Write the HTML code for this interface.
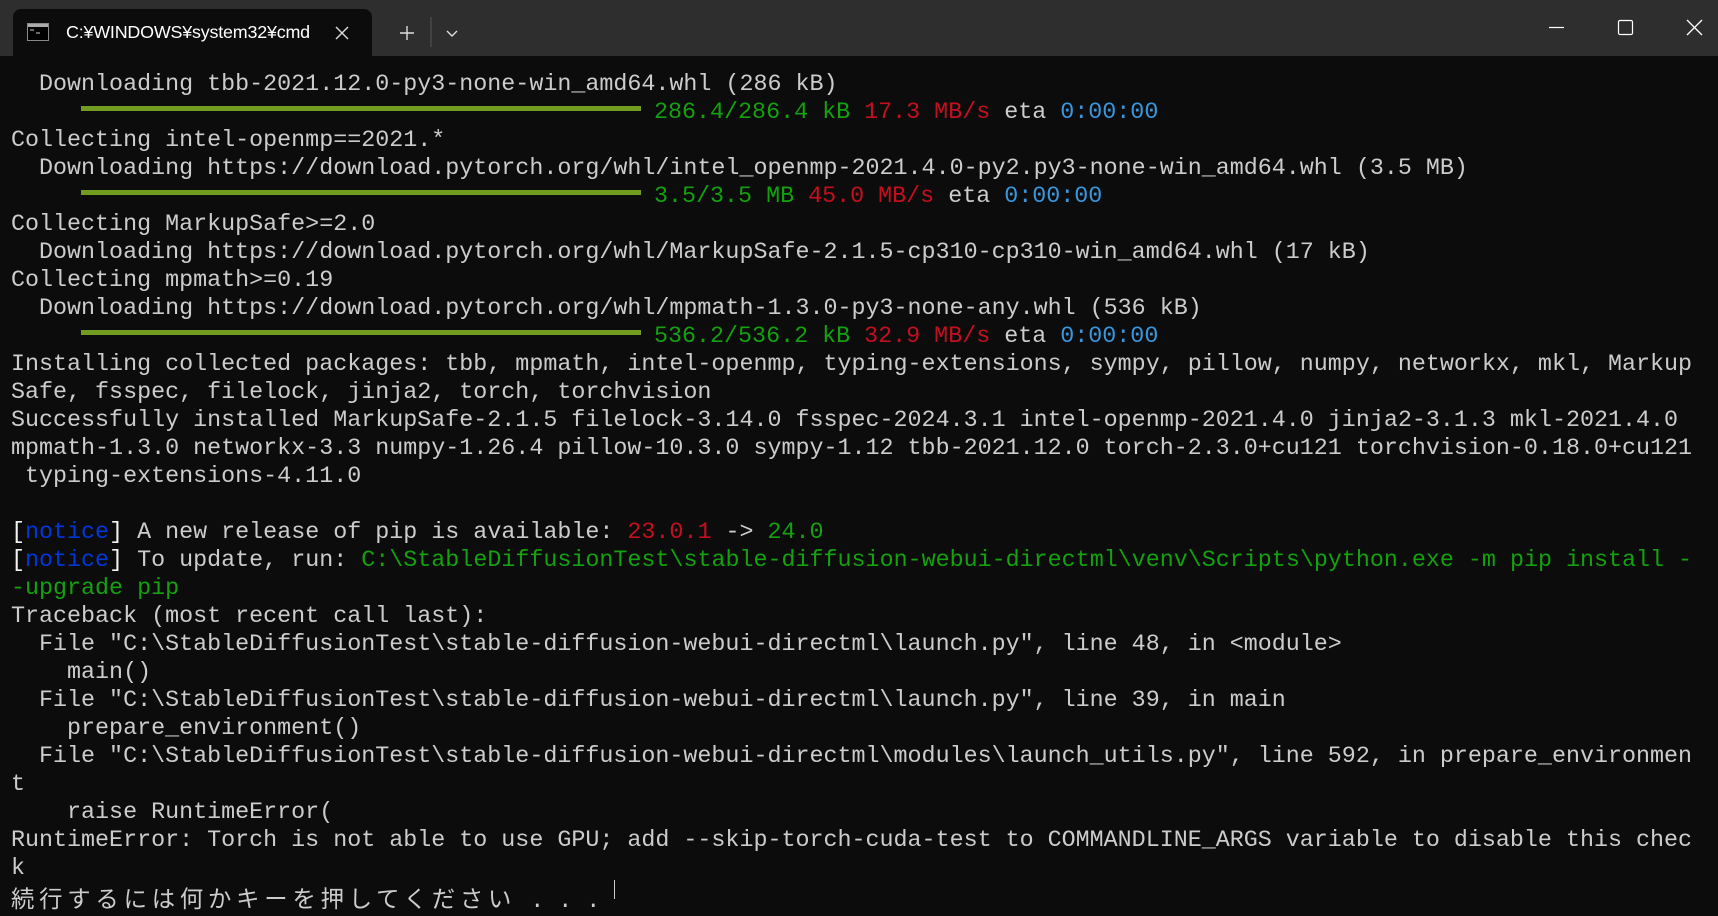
<!DOCTYPE html>
<html><head><meta charset="utf-8"><style>
html,body{margin:0;padding:0;width:1718px;height:899px;overflow:hidden;background:#0c0c0c;}
#tb{position:absolute;left:0;top:0;width:1718px;height:56px;background:#2e2e2e;}
#tab{position:absolute;left:13px;top:9px;width:359px;height:47px;background:#0c0c0c;border-radius:8px 8px 0 0;}
#title{position:absolute;left:66px;top:22px;font:17.9px "Liberation Sans",sans-serif;color:#fff;letter-spacing:-0.2px;}
#term{position:absolute;left:11px;top:71px;font-family:"Liberation Mono",monospace;font-size:23.35px;line-height:28px;color:#cccccc;white-space:pre;}
.g{color:#13a10e}.r{color:#c50f1f}.b{color:#3a96dd}.n{color:#0037da}.w{color:#f2f2f2}
.bar{display:inline-block;width:560px;height:5px;background:#729c1f;vertical-align:middle;margin-left:70px;margin-right:13px;position:relative;top:-3px}
.jp{font-family:"Noto Sans CJK JP",sans-serif;letter-spacing:4.8px;}
</style></head><body>
<div id="tb"></div>
<div id="tab"></div>
<svg style="position:absolute;left:0;top:0" width="1718" height="56">
<rect x="27.5" y="23.5" width="21" height="17" fill="#000" stroke="#888" stroke-width="1"/>
<rect x="28" y="24" width="20" height="3" fill="#aaa"/>
<path d="M30 30h4M36 33h4" stroke="#ccc" stroke-width="1"/>
<path d="M336 27l12 12M348 27l-12 12" stroke="#ddd" stroke-width="1.4"/>
<path d="M400 33h14M407 26v14" stroke="#ddd" stroke-width="1.4"/>
<path d="M431 17v30" stroke="#555" stroke-width="1"/>
<path d="M447 31l5 5 5-5" stroke="#ddd" stroke-width="1.4" fill="none"/>
<path d="M1549 27.5h15" stroke="#fff" stroke-width="1.2"/>
<rect x="1618.5" y="20.5" width="14" height="14" rx="1.5" fill="none" stroke="#fff" stroke-width="1.2"/>
<path d="M1687 20l15 15M1702 20l-15 15" stroke="#fff" stroke-width="1.3"/>
</svg>
<div id="title">C:¥WINDOWS¥system32¥cmd</div>
<div id="term">  Downloading tbb-2021.12.0-py3-none-win_amd64.whl (286 kB)
<span class="bar"></span><span class="g">286.4/286.4 kB</span> <span class="r">17.3 MB/s</span> eta <span class="b">0:00:00</span>
Collecting intel-openmp==2021.*
  Downloading https://download.pytorch.org/whl/intel_openmp-2021.4.0-py2.py3-none-win_amd64.whl (3.5 MB)
<span class="bar"></span><span class="g">3.5/3.5 MB</span> <span class="r">45.0 MB/s</span> eta <span class="b">0:00:00</span>
Collecting MarkupSafe&gt;=2.0
  Downloading https://download.pytorch.org/whl/MarkupSafe-2.1.5-cp310-cp310-win_amd64.whl (17 kB)
Collecting mpmath&gt;=0.19
  Downloading https://download.pytorch.org/whl/mpmath-1.3.0-py3-none-any.whl (536 kB)
<span class="bar"></span><span class="g">536.2/536.2 kB</span> <span class="r">32.9 MB/s</span> eta <span class="b">0:00:00</span>
Installing collected packages: tbb, mpmath, intel-openmp, typing-extensions, sympy, pillow, numpy, networkx, mkl, Markup
Safe, fsspec, filelock, jinja2, torch, torchvision
Successfully installed MarkupSafe-2.1.5 filelock-3.14.0 fsspec-2024.3.1 intel-openmp-2021.4.0 jinja2-3.1.3 mkl-2021.4.0
mpmath-1.3.0 networkx-3.3 numpy-1.26.4 pillow-10.3.0 sympy-1.12 tbb-2021.12.0 torch-2.3.0+cu121 torchvision-0.18.0+cu121
 typing-extensions-4.11.0

<span class="w">[</span><span class="n">notice</span><span class="w">]</span> A new release of pip is available: <span class="r">23.0.1</span> -&gt; <span class="g">24.0</span>
<span class="w">[</span><span class="n">notice</span><span class="w">]</span> To update, run: <span class="g">C:\StableDiffusionTest\stable-diffusion-webui-directml\venv\Scripts\python.exe -m pip install -</span>
<span class="g">-upgrade pip</span>
Traceback (most recent call last):
  File "C:\StableDiffusionTest\stable-diffusion-webui-directml\launch.py", line 48, in &lt;module&gt;
    main()
  File "C:\StableDiffusionTest\stable-diffusion-webui-directml\launch.py", line 39, in main
    prepare_environment()
  File "C:\StableDiffusionTest\stable-diffusion-webui-directml\modules\launch_utils.py", line 592, in prepare_environmen
t
    raise RuntimeError(
RuntimeError: Torch is not able to use GPU; add --skip-torch-cuda-test to COMMANDLINE_ARGS variable to disable this chec
k
<span class="jp">続行するには何かキーを押してください</span> . . .</div>
<div style="position:absolute;left:614px;top:880px;width:1px;height:19px;background:#ccc"></div>
</body></html>
